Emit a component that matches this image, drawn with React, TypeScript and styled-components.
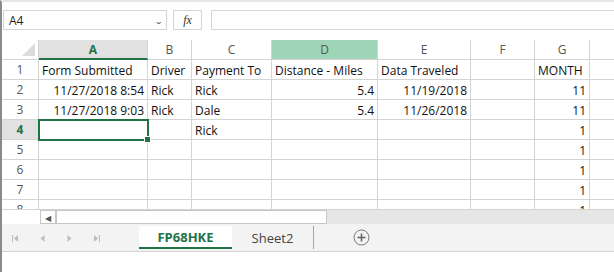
import React from 'react';
import styled, {createGlobalStyle, css} from 'styled-components';

const GREEN = '#217346';
const GRID = '#d4d4d4';

const GlobalStyle = createGlobalStyle`
	html, body {
		margin: 0;
		padding: 0;
		background: #ffffff;
		font-family: 'Open Sans', 'Liberation Sans', sans-serif;
	}
`;

const COLS = [37, 109, 44, 80, 106, 93, 64, 55, 24];
const template = COLS.map(w => `${w}px`).join(' ');

const Window = styled.div`
	width: 614px;
	height: 272px;
	overflow: hidden;
	display: flex;
	flex-direction: column;
	border-left: 2px solid #8a8a8a;
	border-top: 2px solid #e6e6e6;
	box-sizing: border-box;
	background: #fff;
`;

const FormulaBar = styled.div`
	display: flex;
	align-items: flex-start;
	height: 36px;
	padding: 8px 0 0 1px;
	box-sizing: border-box;
	gap: 6px;
`;

const NameBox = styled.div`
	width: 164px;
	height: 20px;
	box-sizing: border-box;
	border: 1px solid ${GRID};
	display: flex;
	align-items: center;
	justify-content: space-between;
	padding: 0 4px 0 5px;
	font-size: 12px;
	color: #222;
`;

const Chevron = styled.span`
	font-size: 8px;
	color: #555;
	transform: scaleX(1.4);
`;

const FxBox = styled.div`
	width: 29px;
	height: 20px;
	box-sizing: border-box;
	border: 1px solid ${GRID};
	display: flex;
	align-items: center;
	justify-content: center;
	font-family: 'Liberation Serif', serif;
	font-style: italic;
	font-size: 12px;
	color: #333;
`;

const FormulaInput = styled.div`
	flex: 1;
	height: 20px;
	box-sizing: border-box;
	border: 1px solid ${GRID};
	border-right: none;
	margin-left: 3px;
`;

const Sheet = styled.div`
	display: grid;
	grid-template-columns: ${template};
	grid-auto-rows: 20px;
	height: 169px;
	overflow: hidden;
	margin-top: 2px;
`;

const Corner = styled.div`
	position: relative;
	border-right: 1px solid ${GRID};
	border-bottom: 1px solid ${GRID};
	&::after {
		content: '';
		position: absolute;
		right: 3px;
		bottom: 3px;
		width: 0;
		height: 0;
		border-left: 13px solid transparent;
		border-bottom: 13px solid #dcdcdc;
	}
`;

const ColHead = styled.div<{$active?: boolean; $tint?: boolean; $last?: boolean}>`
	display: flex;
	align-items: center;
	justify-content: center;
	font-size: 12px;
	color: #555;
	border-right: ${p => (p.$last ? 'none' : `1px solid ${GRID}`)};
	border-bottom: 1px solid ${GRID};
	${p => p.$tint && css`background: #9fd5b7;`}
	${p =>
		p.$active &&
		css`
			background: #e1e1e1;
			color: ${GREEN};
			font-weight: 700;
			border-bottom: 2px solid ${GREEN};
		`}
`;

const RowHead = styled.div<{$active?: boolean}>`
	display: flex;
	align-items: center;
	justify-content: center;
	font-size: 12px;
	color: #555;
	border-right: 1px solid ${GRID};
	border-bottom: 1px solid ${GRID};
	${p =>
		p.$active &&
		css`
			background: #e1e1e1;
			color: ${GREEN};
			font-weight: 700;
		`}
`;

const Cell = styled.div<{$right?: boolean; $selected?: boolean}>`
	position: relative;
	display: flex;
	align-items: center;
	justify-content: ${p => (p.$right ? 'flex-end' : 'flex-start')};
	padding: 1px 3px 0;
	font-size: 12px;
	color: #111;
	white-space: nowrap;
	border-right: 1px solid ${GRID};
	border-bottom: 1px solid ${GRID};
	${p =>
		p.$selected &&
		css`
			outline: 2px solid ${GREEN};
			outline-offset: -1px;
			z-index: 1;
			&::after {
				content: '';
				position: absolute;
				right: -4px;
				bottom: -4px;
				width: 5px;
				height: 5px;
				background: ${GREEN};
				border: 1px solid #fff;
			}
		`}
`;

const Filler = styled.div`
	border-bottom: 1px solid ${GRID};
`;

const ScrollRow = styled.div`
	display: flex;
	height: 15px;
	background: #e6e6e6;
	border-top: 1px solid ${GRID};
	box-sizing: border-box;
`;

const ScrollPad = styled.div`
	width: 38px;
	background: #fff;
`;

const ScrollBtn = styled.div`
	width: 17px;
	background: #fff;
	border: 1px solid #c6c6c6;
	border-right: 2px solid #c6c6c6;
	box-sizing: border-box;
	display: flex;
	align-items: center;
	justify-content: center;
	font-size: 8px;
	color: #555;
`;

const ScrollThumb = styled.div`
	width: 270px;
	background: #fff;
	border: 1px solid #c6c6c6;
	border-left: none;
	box-sizing: border-box;
`;

const TabBar = styled.div`
	display: flex;
	align-items: stretch;
	height: 28px;
	background: #f3f3f3;
	border-bottom: 1px solid ${GRID};
	margin-left: -2px;
	padding-top: 2px;
	box-sizing: border-box;
`;

const NavGroup = styled.div`
	display: flex;
	align-items: center;
	width: 139px;
	padding-left: 11px;
	box-sizing: border-box;
	gap: 18px;
`;

const Tab = styled.div<{$active?: boolean}>`
	display: flex;
	align-items: center;
	justify-content: center;
	font-size: 13px;
	height: 23px;
	box-sizing: border-box;
	${p =>
		p.$active
			? css`
					width: 93px;
					background: #fff;
					color: ${GREEN};
					font-weight: 700;
					border-bottom: 2px solid ${GREEN};
			  `
			: css`
					width: 82px;
					color: #444;
					border-right: 1px solid #a6a6a6;
			  `}
`;

const AddWrap = styled.div`
	display: flex;
	align-items: center;
	padding-left: 39px;
	height: 23px;
`;

const Rest = styled.div`
	flex: 1;
	background: #fff;
`;

const NavIcon = ({kind}: {kind: 'first' | 'prev' | 'next' | 'last'}) => (
	<svg width="9" height="9" viewBox="0 0 9 9">
		{kind === 'first' && (
			<>
				<rect x="1" y="1" width="1" height="7" fill="#bdbdbd" />
				<path d="M7 1 L3 4.5 L7 8 Z" fill="#bdbdbd" />
			</>
		)}
		{kind === 'prev' && <path d="M6.5 1 L2.5 4.5 L6.5 8 Z" fill="#bdbdbd" />}
		{kind === 'next' && <path d="M2.5 1 L6.5 4.5 L2.5 8 Z" fill="#bdbdbd" />}
		{kind === 'last' && (
			<>
				<path d="M2 1 L6 4.5 L2 8 Z" fill="#bdbdbd" />
				<rect x="7" y="1" width="1" height="7" fill="#bdbdbd" />
			</>
		)}
	</svg>
);

const PlusIcon = () => (
	<svg width="17" height="17" viewBox="0 0 17 17">
		<circle cx="8.5" cy="8.5" r="7.5" fill="none" stroke="#777" strokeWidth="1" />
		<path d="M8.5 4.5 V12.5 M4.5 8.5 H12.5" stroke="#666" strokeWidth="1.6" />
	</svg>
);

type Row = {n: number; cells: {v: string; right?: boolean}[]};

const rows: Row[] = [
	{n: 1, cells: [{v: 'Form Submitted'}, {v: 'Driver'}, {v: 'Payment To'}, {v: 'Distance - Miles'}, {v: 'Data Traveled'}, {v: ''}, {v: 'MONTH'}]},
	{n: 2, cells: [{v: '11/27/2018 8:54', right: true}, {v: 'Rick'}, {v: 'Rick'}, {v: '5.4', right: true}, {v: '11/19/2018', right: true}, {v: ''}, {v: '11', right: true}]},
	{n: 3, cells: [{v: '11/27/2018 9:03', right: true}, {v: 'Rick'}, {v: 'Dale'}, {v: '5.4', right: true}, {v: '11/26/2018', right: true}, {v: ''}, {v: '11', right: true}]},
	{n: 4, cells: [{v: ''}, {v: ''}, {v: 'Rick'}, {v: ''}, {v: ''}, {v: ''}, {v: '1', right: true}]},
	{n: 5, cells: [{v: ''}, {v: ''}, {v: ''}, {v: ''}, {v: ''}, {v: ''}, {v: '1', right: true}]},
	{n: 6, cells: [{v: ''}, {v: ''}, {v: ''}, {v: ''}, {v: ''}, {v: ''}, {v: '1', right: true}]},
	{n: 7, cells: [{v: ''}, {v: ''}, {v: ''}, {v: ''}, {v: ''}, {v: ''}, {v: '1', right: true}]},
	{n: 8, cells: [{v: ''}, {v: ''}, {v: ''}, {v: ''}, {v: ''}, {v: ''}, {v: '1', right: true}]}
];

const letters = ['A', 'B', 'C', 'D', 'E', 'F', 'G'];

export default function App() {
	return (
		<>
			<GlobalStyle />
			<Window>
				<FormulaBar>
					<NameBox>
						<span>A4</span>
						<Chevron>⌄</Chevron>
					</NameBox>
					<FxBox>fx</FxBox>
					<FormulaInput />
				</FormulaBar>
				<Sheet>
					<Corner />
					{letters.map(l => (
						<ColHead key={l} $active={l === 'A'} $tint={l === 'D'}>
							{l}
						</ColHead>
					))}
					<ColHead $last />
					{rows.map(r => (
						<React.Fragment key={r.n}>
							<RowHead $active={r.n === 4}>{r.n}</RowHead>
							{r.cells.map((c, i) => (
								<Cell key={i} $right={c.right} $selected={r.n === 4 && i === 0}>
									{c.v}
								</Cell>
							))}
							<Filler />
						</React.Fragment>
					))}
				</Sheet>
				<ScrollRow>
					<ScrollPad />
					<ScrollBtn>◀</ScrollBtn>
					<ScrollThumb />
				</ScrollRow>
				<TabBar>
					<NavGroup>
						<NavIcon kind="first" />
						<NavIcon kind="prev" />
						<NavIcon kind="next" />
						<NavIcon kind="last" />
					</NavGroup>
					<Tab $active>FP68HKE</Tab>
					<Tab>Sheet2</Tab>
					<AddWrap>
						<PlusIcon />
					</AddWrap>
				</TabBar>
				<Rest />
			</Window>
		</>
	);
}
